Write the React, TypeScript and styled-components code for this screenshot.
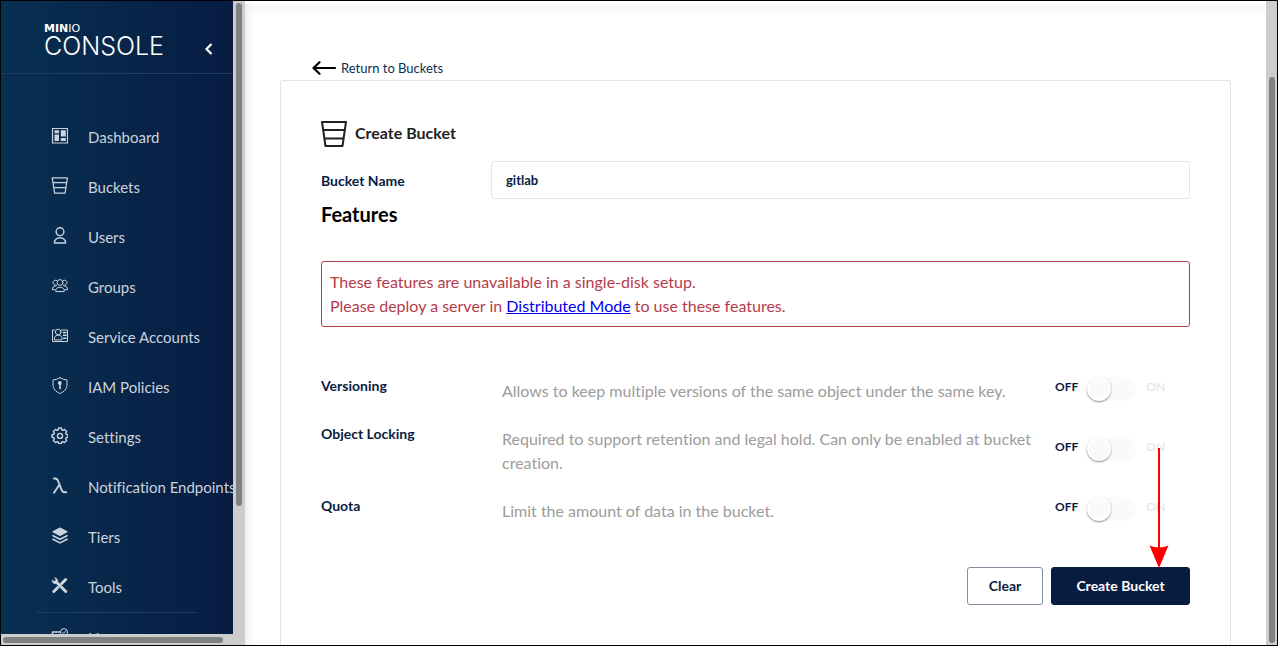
import React from "react";
import styled, { createGlobalStyle } from "styled-components";

const GlobalStyle = createGlobalStyle`
  *, *::before, *::after { box-sizing: border-box; }
  body {
    margin: 0;
    background: #fff;
    color: #000;
    font-family: Lato, "Liberation Sans", sans-serif;
    font-size: 16px;
    font-variant-ligatures: none;
  }
`;

const Shell = styled.div`
  display: flex;
  height: 100vh;
  border: 1px solid #000;
  overflow: hidden;
`;

const Sidebar = styled.aside`
  flex: 0 0 244px;
  display: grid;
  grid-template: minmax(0, 1fr) 11px / minmax(0, 1fr) 12px;
  background: #cdcdcd;
`;

const SidebarBody = styled.div`
  overflow: hidden;
  background: linear-gradient(90deg, #073052 0%, #081c42 100%);
`;

const Track = styled.div<{ $width: number }>`
  display: flex;
  flex-direction: column;
  flex: none;
  width: ${(p) => p.$width}px;
  padding: 2px ${(p) => p.$width - 9}px 2px 3px;
  background: #cdcdcd;
`;

const Thumb = styled.div<{ $size: number }>`
  flex: ${(p) => p.$size} 0 0;
  border-radius: 3px;
  background: #7d8181;
`;

const Gap = styled.div<{ $size: number }>`
  flex: ${(p) => p.$size} 0 0;
`;

const SideThumb = styled.div`
  width: 95%;
  height: 6px;
  margin: 3px 2px;
  border-radius: 3px;
  background: #7d8181;
`;

const Brand = styled.div`
  display: flex;
  justify-content: space-between;
  align-items: flex-end;
  height: 73px;
  padding: 0 18px 15px 43px;
  border-bottom: 1px solid #1e3b61;
  color: #fff;
`;

const BrandName = styled.div`
  font-family: Inter, "Liberation Sans", sans-serif;
  font-size: 25px;
  font-weight: 300;
  line-height: 24px;
`;

const BrandTop = styled.div`
  font-family: "DejaVu Sans", sans-serif;
  font-size: 11px;
  line-height: 10px;
  font-weight: 400;
  b { font-weight: 700; }
`;

const Collapse = styled.button`
  display: flex;
  padding: 0;
  border: 0;
  background: none;
  color: #fff;
`;

const Menu = styled.nav`
  display: flex;
  flex-direction: column;
  padding-top: 38px;
`;

const MenuLink = styled.a`
  display: flex;
  flex: 0 0 50px;
  align-items: center;
  gap: 20px;
  padding-left: 50px;
  color: #ccd3dc;
  font-size: 15px;
  line-height: 20px;
  text-decoration: none;
  white-space: nowrap;
  svg { flex: none; margin-bottom: 4px; }
`;

const MenuDivider = styled.hr`
  width: 161px;
  height: 1px;
  margin: 0 0 0 35px;
  border: 0;
  background: #1e3b61;
`;

const Main = styled.main`
  flex: 1;
  min-width: 0;
  overflow: hidden;
  box-shadow: inset 8px 0 8px -6px #e8e8e8;
`;

const TopBar = styled.header`
  height: 3px;
  background: #fff;
  box-shadow: 0 3px 12px #dedede;
`;

const Page = styled.div`
  padding: 54px 35px 0;
`;

const BackLink = styled.a`
  display: flex;
  align-items: center;
  gap: 5px;
  width: max-content;
  height: 20px;
  margin: 0 0 2px 32px;
  color: #073052;
  font-size: 13px;
  line-height: 20px;
  text-decoration: none;
`;

const Card = styled.form`
  padding: 40px 40px 80px;
  border: 1px solid #e5e5e5;
  border-radius: 2px;
`;

const Title = styled.h1`
  display: flex;
  align-items: flex-start;
  gap: 8px;
  height: 26px;
  margin: 0 0 14px;
  color: #222;
  font-size: 16px;
  line-height: 24px;
`;

const NameRow = styled.div`
  display: grid;
  grid-template-columns: 170px minmax(0, 1fr);
  align-items: center;
`;

const Label = styled.label`
  color: #081c42;
  font-size: 14px;
  font-weight: 700;
  line-height: 20px;
`;

const NameLabel = styled(Label)`
  padding-top: 2px;
`;

const NameInput = styled.input`
  width: 100%;
  height: 38px;
  padding: 0 14px;
  border: 1px solid #e5e5e5;
  border-radius: 3px;
  color: #081c42;
  font: 700 13px/20px Lato, "Liberation Sans", sans-serif;
`;

const SectionTitle = styled.h2`
  margin: 3px 0 35px;
  font-size: 20px;
  line-height: 24px;
`;

const Notice = styled.p`
  margin: 0;
  padding: 8px;
  border: 1px solid #b53b4b;
  border-radius: 3px;
  color: #b53b4b;
  line-height: 24px;
  a { color: #0000ee; }
`;

const Features = styled.div`
  display: flex;
  flex-direction: column;
  gap: 24px;
  padding: 52px 0 44px;
`;

const FeatureRow = styled.div`
  display: grid;
  grid-template-columns: 181px minmax(0, 1fr) 135px;
`;

const FeatureLabel = styled(Label)`
  margin-top: -3px;
`;

const Description = styled.span`
  padding-right: 16px;
  color: #9c9c9c;
  line-height: 24px;
`;

const SwitchGroup = styled.div`
  display: flex;
  align-items: center;
  align-self: center;
  height: 24px;
  margin-top: -4px;
`;

const State = styled.span<{ $active?: boolean }>`
  margin-bottom: 4px;
  color: ${(p) => (p.$active ? "#081c42" : "#e3e3e3")};
  font-size: 12px;
  font-weight: ${(p) => (p.$active ? 700 : 400)};
  line-height: 16px;
`;

const Switch = styled.input`
  appearance: none;
  display: flex;
  width: 49px;
  height: 24px;
  margin: 0 10px 0 9px;
  border-radius: 12px;
  background: #fafafa;
  &::before {
    content: "";
    width: 24px;
    height: 24px;
    border: 2px solid #fff;
    border-radius: 50%;
    background: #fafafa;
    box-shadow: 0 1px 2px #8c8c8c;
  }
`;

const Actions = styled.div`
  display: flex;
  justify-content: flex-end;
  gap: 8px;
`;

const Button = styled.button<{ $primary?: boolean }>`
  position: relative;
  height: 38px;
  min-width: ${(p) => (p.$primary ? 139 : 76)}px;
  border: 1px solid ${(p) => (p.$primary ? "#081c42" : "#838da0")};
  border-radius: 3px;
  background: ${(p) => (p.$primary ? "#081c42" : "#fff")};
  color: ${(p) => (p.$primary ? "#fff" : "#081c42")};
  font: 700 14px/20px Lato, "Liberation Sans", sans-serif;
`;

const Pointer = styled.svg`
  position: absolute;
  right: 20px;
  bottom: 100%;
  pointer-events: none;
`;

const icon = (children: React.ReactNode) => (
  <svg width="17" height="17" viewBox="0 0 17 17" fill="none" stroke="currentColor" strokeWidth="1.2" strokeLinecap="round" strokeLinejoin="round" aria-hidden="true">
    {children}
  </svg>
);

const menu: { label: string; glyph: React.ReactNode }[] = [
  {
    label: "Dashboard",
    glyph: icon(
      <>
        <rect x="1.5" y="1.5" width="15" height="14.500" strokeWidth="1.200" />
        <path d="M3.500 3.200H8v3H3.500zM3.500 7.500H8V14H3.500zM9.800 3.200h5v6.300h-5zM9.800 11h5v3h-5z" fill="currentColor" stroke="none" />
      </>
    ),
  },
  { label: "Buckets", glyph: icon(<path d="M1.2.8h15.2l-2.3 15.3h-10.500zM1.9 5.7h13.700M2.8 10.700h12" />) },
  {
    label: "Users",
    glyph: icon(
      <>
        <circle cx="9" cy="4.700" r="3.900" strokeWidth="1.400" />
        <path d="M3.500 16c-.7-2.700 2-5.200 5.500-5.200s6.200 2.500 5.500 5.200z" strokeWidth="1.400" />
      </>
    ),
  },
  {
    label: "Groups",
    glyph: icon(
      <g strokeWidth="1">
        <circle cx="9" cy="5.500" r="2.900" />
        <path d="M4.700 14.200c-.5-2.200 1.500-4 4.300-4s4.800 1.800 4.300 4z" />
        <path d="M5.500 8.200C3.500 8.700 2 7.200 2 5.600 2 3.800 3.800 2.600 5.600 3.400M12.500 8.200c2 .5 3.500-1 3.500-2.600 0-1.800-1.800-3-3.600-2.200M4 12.700H1.300c0-2.500 1-3.700 3.700-3.700M14 12.700h2.700c0-2.500-1-3.700-3.700-3.700" />
      </g>
    ),
  },
  {
    label: "Service Accounts",
    glyph: icon(
      <g strokeWidth="1">
        <path d="M3.500 3H1.500v11.500h15V3h-6" />
        <circle cx="7.200" cy="5" r="2.800" />
        <path d="M3.300 12.500c-.3-2.700 1.200-4.300 3.900-4.300s4.200 1.600 3.900 4.300z" />
        <path d="M12.500 5.500h2.500M12.500 8.300h2.500M12.500 11.200h2.500" strokeWidth="1.600" />
      </g>
    ),
  },
  {
    label: "IAM Policies",
    glyph: icon(
      <>
        <path d="M9 .7c2 1.300 4.400 2 7 2.200v5c0 4-2.800 6.800-7 8.600-4.200-1.800-7-4.600-7-8.600v-5C4.600 2.700 7 2 9 .7z" strokeWidth="1" />
        <circle cx="8.800" cy="6" r="1.300" fill="currentColor" />
        <path d="M9 6v5.500" strokeWidth="1.700" />
      </>
    ),
  },
  {
    label: "Settings",
    glyph: icon(
      <>
        <path d="M7.600 1h2.800l.5 2 1 .4 1.800-1 2 2-1 1.800.4 1 1.900.5v2.600l-1.900.5-.4 1 1 1.800-2 2-1.800-1-1 .4-.5 1.500H7.600l-.5-1.500-1-.4-1.800 1-2-2 1-1.800-.4-1L1 10.300V7.700l1.900-.5.4-1-1-1.800 2-2 1.800 1 1-.4z" strokeWidth="1.400" />
        <circle cx="9" cy="8.900" r="2.500" strokeWidth="1.400" />
      </>
    ),
  },
  {
    label: "Notification Endpoints",
    glyph: icon(<path d="M3 1.500h1.200c1.600 0 2.300 1 2.900 2.500l3.700 9.300c.6 1.600 1.800 2.200 4.400 1.900M8.500 7.500 3 15.700" strokeWidth="1.900" />),
  },
  {
    label: "Tiers",
    glyph: icon(
      <>
        <path d="m9 1 7 3.700-7 3.700-7-3.700z" fill="currentColor" />
        <path d="m2 8.700 7 3.500 7-3.500M2 12.200l7 3.700 7-3.700" strokeWidth="1.600" />
      </>
    ),
  },
  {
    label: "Tools",
    glyph: icon(
      <>
        <path d="m5 4.700 9.800 9.800M2.800 14.500l4-4M10.700 6.500l4-4" strokeWidth="3" />
        <path d="M1.200 3.200c-.3 2.500 2 4.200 4.400 3.200l1-1C7.400 3 5.800.8 3.500.8L5.200 2.700 3.500 4.600z" fill="currentColor" strokeWidth=".6" />
      </>
    ),
  },
];

const licenseGlyph = icon(
  <>
    <path d="M9 4H1.500v10h14v-4" strokeWidth="1.500" />
    <circle cx="13" cy="4.200" r="3.600" strokeWidth="1" />
    <path d="m11.500 4.200 1.100 1.200 2-2.400" strokeWidth="1" />
  </>
);

const features = [
  { id: "versioning", label: "Versioning", text: "Allows to keep multiple versions of the same object under the same key." },
  { id: "locking", label: "Object Locking", text: "Required to support retention and legal hold. Can only be enabled at bucket creation." },
  { id: "quota", label: "Quota", text: "Limit the amount of data in the bucket." },
];

export default function App() {
  return (
    <>
      <GlobalStyle />
      <Shell>
        <Sidebar>
          <SidebarBody>
            <Brand>
              <BrandName>
                <BrandTop><b>MIN</b>IO</BrandTop>
                CONSOLE
              </BrandName>
              <Collapse type="button" aria-label="Collapse menu">
                <svg width="12" height="18" viewBox="0 0 12 18" fill="none" stroke="currentColor" strokeWidth="2.200">
                  <path d="M8.500 4 3.500 9l5 5" />
                </svg>
              </Collapse>
            </Brand>
            <Menu>
              {menu.map((m) => (
                <MenuLink href="#" key={m.label}>{m.glyph}{m.label}</MenuLink>
              ))}
              <MenuDivider />
              <MenuLink href="#">{licenseGlyph}License</MenuLink>
            </Menu>
          </SidebarBody>
          <Track $width={12}>
            <Thumb $size={80} />
            <Gap $size={20} />
          </Track>
          <SideThumb />
        </Sidebar>
        <Main>
          <TopBar />
          <Page>
            <BackLink href="#">
              <svg width="24" height="14" viewBox="0 0 24 14" fill="none" stroke="#000" strokeWidth="2.200" strokeLinecap="round" strokeLinejoin="round" aria-hidden="true">
                <path d="M23 7H1.500M7.500 1.200 1.500 7l6 5.800" />
              </svg>
              Return to Buckets
            </BackLink>
            <Card onSubmit={(e) => e.preventDefault()}>
              <Title>
                <svg width="26" height="26" viewBox="0 0 26 26" fill="none" stroke="currentColor" strokeWidth="2" strokeLinejoin="round" aria-hidden="true">
                  <path d="M1 1h24l-3.500 24h-17zM2 9h22M3.500 17.500h19" />
                </svg>
                Create Bucket
              </Title>
              <NameRow>
                <NameLabel htmlFor="bucket-name">Bucket Name</NameLabel>
                <NameInput id="bucket-name" defaultValue="gitlab" />
              </NameRow>
              <SectionTitle>Features</SectionTitle>
              <Notice>
                These features are unavailable in a single-disk setup.
                <br />
                Please deploy a server in <a href="#">Distributed Mode</a> to use these features.
              </Notice>
              <Features>
                {features.map((f) => (
                  <FeatureRow key={f.id}>
                    <FeatureLabel htmlFor={f.id}>{f.label}</FeatureLabel>
                    <Description>{f.text}</Description>
                    <SwitchGroup>
                      <State $active>OFF</State>
                      <Switch type="checkbox" role="switch" id={f.id} disabled />
                      <State>ON</State>
                    </SwitchGroup>
                  </FeatureRow>
                ))}
              </Features>
              <Actions>
                <Button type="button">Clear</Button>
                <Button type="submit" $primary>
                  Create Bucket
                  <Pointer width="20" height="120" viewBox="0 0 20 120" aria-hidden="true">
                    <path d="M10 0v102" stroke="#f00" strokeWidth="2" />
                    <path d="M.5 97.500Q10 101.500 19.500 97.500L10 120z" fill="#f00" />
                  </Pointer>
                </Button>
              </Actions>
            </Card>
          </Page>
        </Main>
        <Track $width={11}>
          <Gap $size={23} />
          <Thumb $size={177} />
        </Track>
      </Shell>
    </>
  );
}
